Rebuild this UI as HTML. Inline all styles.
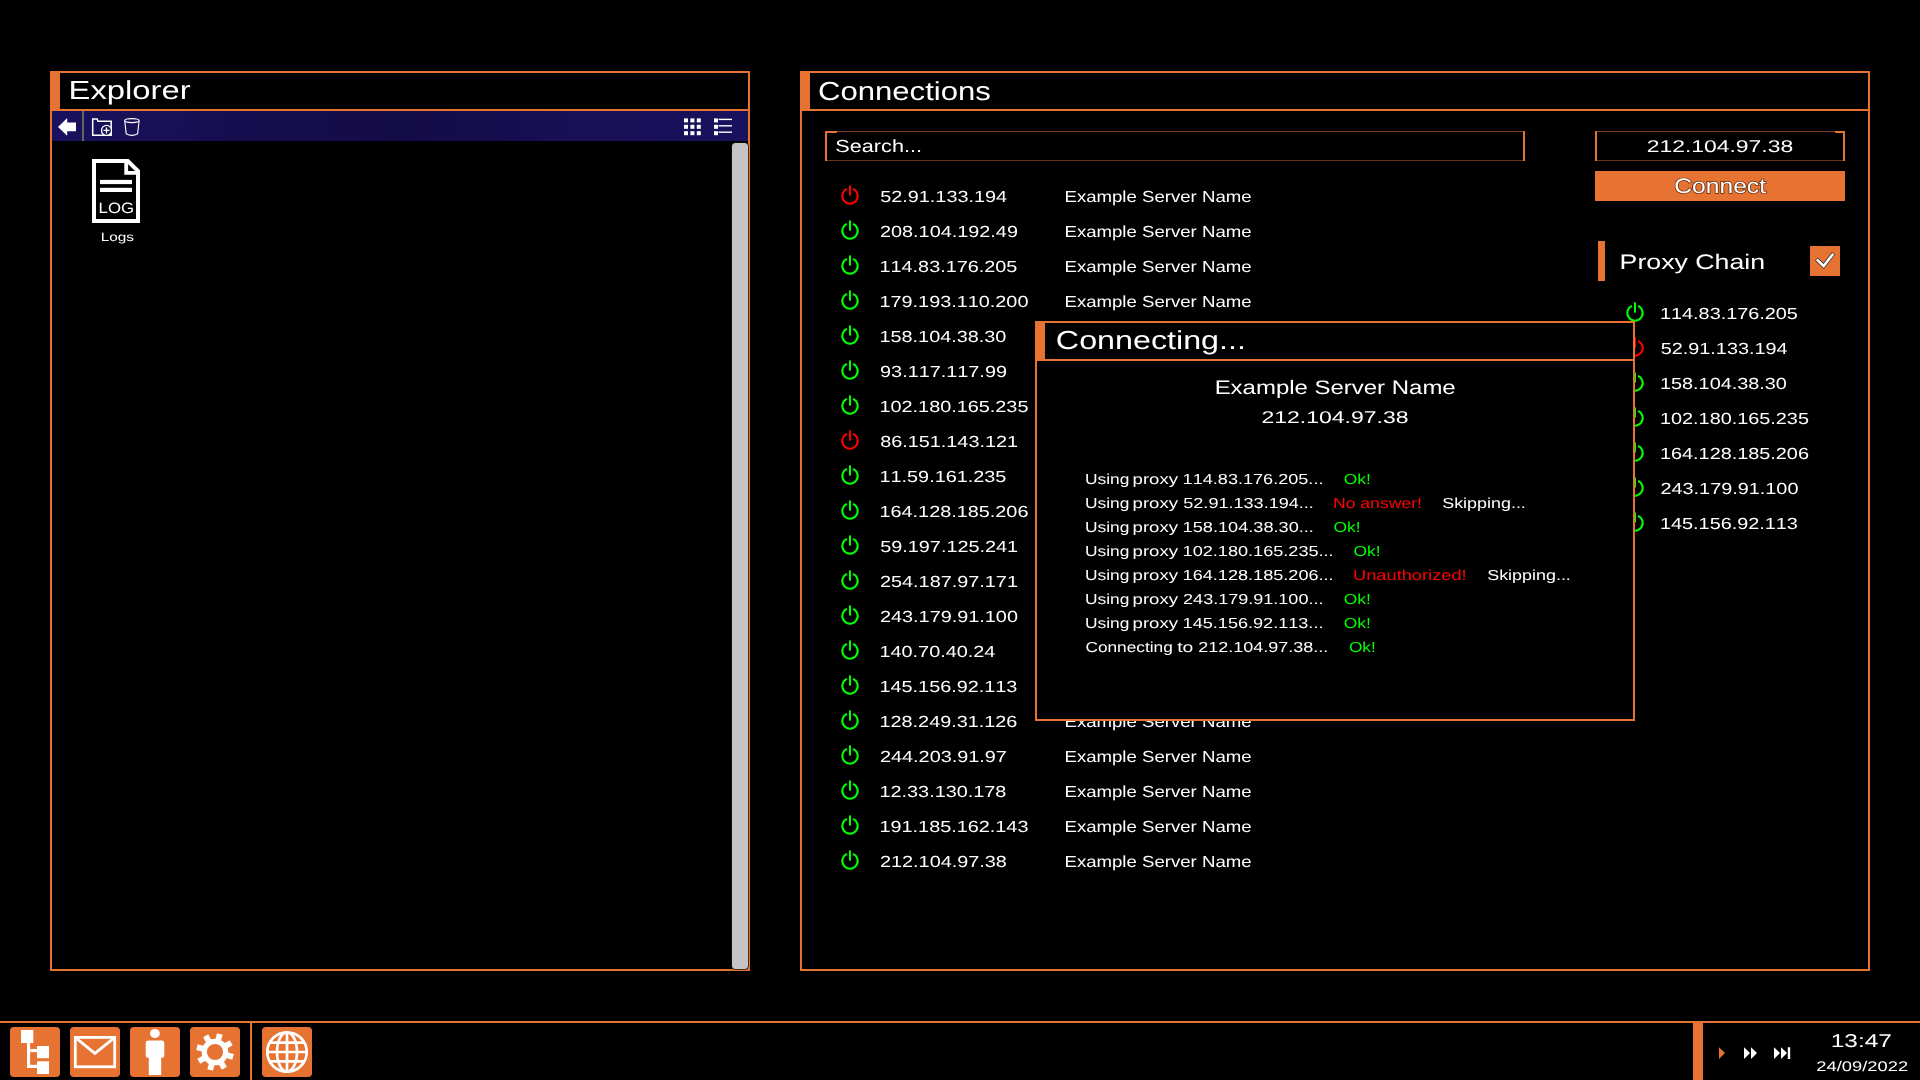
<!DOCTYPE html>
<html><head><meta charset="utf-8"><title>Connections</title>
<style>
html,body{margin:0;padding:0;background:#000;}
body{width:1920px;height:1080px;position:relative;overflow:hidden;font-family:"Liberation Sans",sans-serif;}
.a{position:absolute;display:block;}
.t{position:absolute;left:0;top:0;display:block;white-space:nowrap;transform-origin:0 0;font-kerning:none;will-change:transform;text-rendering:geometricPrecision;}
.win{position:absolute;box-sizing:border-box;border:2px solid #e67332;background:#000;}
</style></head><body>

<div class="win" style="left:50px;top:71px;width:700px;height:900px"></div>
<div class="a" style="left:50px;top:109px;width:700px;height:2px;background:#e67332"></div>
<div class="a" style="left:50px;top:71px;width:10px;height:40px;background:#e67332"></div>
<span class="t" style="font-size:26px;line-height:26px;color:#fff;transform:translate(68.61px,77px) scaleX(1.2594);">Explorer</span>
<div class="a" style="left:52px;top:111px;width:696px;height:30px;background:linear-gradient(93deg,#1a115f 0%,#170e50 25%,#140c47 50%,#180f55 75%,#1a115f 100%)"></div>
<div class="a" style="left:82px;top:111px;width:2px;height:30px;background:#64665f"></div>
<svg class="a" style="left:52px;top:111px" width="40" height="30" viewBox="52 111 40 30"><path d="M58 127L67.2 118V122.6H76V131.2H67.2V135.8Z" fill="#fff"/></svg>
<svg class="a" style="left:88px;top:113px" width="28" height="26" viewBox="88 113 28 26"><path d="M92.7 119.1H97.2L98 121.3H111.2V135.2H92.7Z" fill="none" stroke="#fff" stroke-width="1.5"/><circle cx="106.5" cy="130.4" r="5" fill="#19105a" stroke="#fff" stroke-width="1.3"/><path d="M103.5 130.4H109.5M106.5 127.4V133.4" stroke="#fff" stroke-width="1.3"/></svg>
<svg class="a" style="left:120px;top:113px" width="24" height="26" viewBox="120 113 24 26"><ellipse cx="131.9" cy="120.6" rx="7.2" ry="2" fill="none" stroke="#fff" stroke-width="1.1"/><path d="M124.7 120.6L126.2 133.8Q131.9 137 137.6 133.8L139.1 120.6" fill="none" stroke="#fff" stroke-width="1.1"/></svg>
<svg class="a" style="left:680px;top:114px" width="26" height="26" viewBox="680 114 26 26" fill="#fff"><rect x="684" y="118.4" width="4" height="4"/><rect x="684" y="124.8" width="4" height="4"/><rect x="684" y="131.2" width="4" height="4"/><rect x="690.4" y="118.4" width="4" height="4"/><rect x="690.4" y="124.8" width="4" height="4"/><rect x="690.4" y="131.2" width="4" height="4"/><rect x="696.8" y="118.4" width="4" height="4"/><rect x="696.8" y="124.8" width="4" height="4"/><rect x="696.8" y="131.2" width="4" height="4"/></svg>
<svg class="a" style="left:710px;top:114px" width="26" height="26" viewBox="710 114 26 26" fill="#fff"><rect x="714" y="118.4" width="4" height="4"/><rect x="718.6" y="118.7" width="13.4" height="1.4"/><rect x="714" y="124.8" width="4" height="4"/><rect x="718.6" y="125.1" width="13.4" height="1.4"/><rect x="714" y="131.2" width="4" height="4"/><rect x="718.6" y="131.5" width="13.4" height="1.4"/></svg>
<div class="a" style="left:732px;top:143px;width:16px;height:826px;background:#c4c4c4;border-radius:3.5px;box-shadow:0 0 0 1px rgba(20,14,10,.72)"></div>
<svg class="a" style="left:90px;top:157px" width="54" height="70" viewBox="90 157 54 70"><path d="M94 161H127.8L138 171.2V221H94Z" fill="none" stroke="#fff" stroke-width="4" stroke-linejoin="miter"/><path d="M126.2 161V172.9H138" fill="none" stroke="#fff" stroke-width="3.8"/><rect x="100" y="179.9" width="32" height="4.2" fill="#fff"/><rect x="100" y="187.8" width="32" height="4.2" fill="#fff"/></svg>
<span class="t" style="font-size:15px;line-height:15px;color:#fff;transform:translate(98.62px,201px) scaleX(1.1185);">LOG</span>
<span class="t" style="font-size:12px;line-height:12px;color:#fff;transform:translate(100.74px,231px) scaleX(1.2803);">Logs</span>
<div class="win" style="left:800px;top:71px;width:1070px;height:900px"></div>
<div class="a" style="left:800px;top:109px;width:1070px;height:2px;background:#e67332"></div>
<div class="a" style="left:800px;top:71px;width:10px;height:40px;background:#e67332"></div>
<span class="t" style="font-size:26px;line-height:26px;color:#fff;transform:translate(818.02px,78px) scaleX(1.1956);">Connections</span>
<div class="a" style="left:825px;top:131px;width:700px;height:30px;box-sizing:border-box;border:solid #783a19;border-width:1px 0;border-bottom-color:#663218;"></div>
<div class="a" style="left:825px;top:131px;width:2px;height:30px;background:#e67332"></div>
<div class="a" style="left:1523px;top:131px;width:2px;height:30px;background:#e67332"></div>
<div class="a" style="left:825px;top:131px;width:12px;height:2px;background:#e67332"></div>
<span class="t" style="font-size:17.5px;line-height:17.5px;color:#fff;transform:translate(835.32px,138px) scaleX(1.2374);">Search...</span>
<div class="a" style="left:1595px;top:131px;width:250px;height:30px;box-sizing:border-box;border:solid #783a19;border-width:1px 0;border-bottom-color:#663218;"></div>
<div class="a" style="left:1595px;top:131px;width:2px;height:30px;background:#e67332"></div>
<div class="a" style="left:1843px;top:131px;width:2px;height:30px;background:#e67332"></div>
<div class="a" style="left:1835px;top:131px;width:10px;height:2px;background:#e67332"></div>
<span class="t" style="font-size:17px;line-height:17px;color:#fff;transform:translate(1646.65px,138px) scaleX(1.3480);">212.104.97.38</span>
<div class="a" style="left:1595px;top:171px;width:250px;height:30px;background:#e67332"></div>
<span class="t" style="font-size:21px;line-height:21px;color:#fff;transform:translate(1674.35px,176px) scaleX(1.1715);-webkit-text-stroke:1.4px #5c2609;paint-order:stroke fill;">Connect</span>
<div class="a" style="left:1598px;top:241px;width:7px;height:40px;background:#e67332"></div>
<span class="t" style="font-size:21px;line-height:21px;color:#fff;transform:translate(1619.61px,252px) scaleX(1.2714);">Proxy Chain</span>
<div class="a" style="left:1810px;top:246px;width:30px;height:30px;background:#e67332"></div>
<svg class="a" style="left:1810px;top:246px" width="30" height="30" viewBox="1810 246 30 30"><path d="M1816.4 259L1823.6 266L1833.5 253.3" fill="none" stroke="#2b2b2b" stroke-width="4"/><path d="M1816.8 259.4L1823.6 266L1833.2 253.7" fill="none" stroke="#fff" stroke-width="2.6"/></svg>
<svg class="a" style="left:838px;top:182.25px" width="24" height="28" viewBox="838 182.25 24 28"><path d="M853.01 189.16A7.7 7.7 0 1 1 846.99 189.16" fill="none" stroke="#ff0000" stroke-width="2.05"/><rect x="849" y="185.65" width="2" height="10.2" fill="#ff0000"/></svg>
<span class="t" style="font-size:16px;line-height:16px;color:#fff;transform:translate(880.21px,190px) scaleX(1.2400);">52.91.133.194</span>
<span class="t" style="font-size:16px;line-height:16px;color:#fff;transform:translate(1064.47px,190px) scaleX(1.1628);">Example Server Name</span>
<svg class="a" style="left:838px;top:217.25px" width="24" height="28" viewBox="838 217.25 24 28"><path d="M853.01 224.16A7.7 7.7 0 1 1 846.99 224.16" fill="none" stroke="#00ff00" stroke-width="2.05"/><rect x="849" y="220.65" width="2" height="10.2" fill="#00ff00"/></svg>
<span class="t" style="font-size:16px;line-height:16px;color:#fff;transform:translate(880.00px,225px) scaleX(1.2400);">208.104.192.49</span>
<span class="t" style="font-size:16px;line-height:16px;color:#fff;transform:translate(1064.47px,225px) scaleX(1.1628);">Example Server Name</span>
<svg class="a" style="left:838px;top:252.25px" width="24" height="28" viewBox="838 252.25 24 28"><path d="M853.01 259.16A7.7 7.7 0 1 1 846.99 259.16" fill="none" stroke="#00ff00" stroke-width="2.05"/><rect x="849" y="255.65" width="2" height="10.2" fill="#00ff00"/></svg>
<span class="t" style="font-size:16px;line-height:16px;color:#fff;transform:translate(879.49px,260px) scaleX(1.2400);">114.83.176.205</span>
<span class="t" style="font-size:16px;line-height:16px;color:#fff;transform:translate(1064.47px,260px) scaleX(1.1628);">Example Server Name</span>
<svg class="a" style="left:838px;top:287.25px" width="24" height="28" viewBox="838 287.25 24 28"><path d="M853.01 294.16A7.7 7.7 0 1 1 846.99 294.16" fill="none" stroke="#00ff00" stroke-width="2.05"/><rect x="849" y="290.65" width="2" height="10.2" fill="#00ff00"/></svg>
<span class="t" style="font-size:16px;line-height:16px;color:#fff;transform:translate(879.49px,295px) scaleX(1.2400);">179.193.110.200</span>
<span class="t" style="font-size:16px;line-height:16px;color:#fff;transform:translate(1064.47px,295px) scaleX(1.1628);">Example Server Name</span>
<svg class="a" style="left:838px;top:322.25px" width="24" height="28" viewBox="838 322.25 24 28"><path d="M853.01 329.16A7.7 7.7 0 1 1 846.99 329.16" fill="none" stroke="#00ff00" stroke-width="2.05"/><rect x="849" y="325.65" width="2" height="10.2" fill="#00ff00"/></svg>
<span class="t" style="font-size:16px;line-height:16px;color:#fff;transform:translate(879.49px,330px) scaleX(1.2400);">158.104.38.30</span>
<span class="t" style="font-size:16px;line-height:16px;color:#fff;transform:translate(1064.47px,330px) scaleX(1.1628);">Example Server Name</span>
<svg class="a" style="left:838px;top:357.25px" width="24" height="28" viewBox="838 357.25 24 28"><path d="M853.01 364.16A7.7 7.7 0 1 1 846.99 364.16" fill="none" stroke="#00ff00" stroke-width="2.05"/><rect x="849" y="360.65" width="2" height="10.2" fill="#00ff00"/></svg>
<span class="t" style="font-size:16px;line-height:16px;color:#fff;transform:translate(880.07px,365px) scaleX(1.2400);">93.117.117.99</span>
<span class="t" style="font-size:16px;line-height:16px;color:#fff;transform:translate(1064.47px,365px) scaleX(1.1628);">Example Server Name</span>
<svg class="a" style="left:838px;top:392.25px" width="24" height="28" viewBox="838 392.25 24 28"><path d="M853.01 399.16A7.7 7.7 0 1 1 846.99 399.16" fill="none" stroke="#00ff00" stroke-width="2.05"/><rect x="849" y="395.65" width="2" height="10.2" fill="#00ff00"/></svg>
<span class="t" style="font-size:16px;line-height:16px;color:#fff;transform:translate(879.49px,400px) scaleX(1.2400);">102.180.165.235</span>
<span class="t" style="font-size:16px;line-height:16px;color:#fff;transform:translate(1064.47px,400px) scaleX(1.1628);">Example Server Name</span>
<svg class="a" style="left:838px;top:427.25px" width="24" height="28" viewBox="838 427.25 24 28"><path d="M853.01 434.16A7.7 7.7 0 1 1 846.99 434.16" fill="none" stroke="#ff0000" stroke-width="2.05"/><rect x="849" y="430.65" width="2" height="10.2" fill="#ff0000"/></svg>
<span class="t" style="font-size:16px;line-height:16px;color:#fff;transform:translate(880.14px,435px) scaleX(1.2400);">86.151.143.121</span>
<span class="t" style="font-size:16px;line-height:16px;color:#fff;transform:translate(1064.47px,435px) scaleX(1.1628);">Example Server Name</span>
<svg class="a" style="left:838px;top:462.25px" width="24" height="28" viewBox="838 462.25 24 28"><path d="M853.01 469.16A7.7 7.7 0 1 1 846.99 469.16" fill="none" stroke="#00ff00" stroke-width="2.05"/><rect x="849" y="465.65" width="2" height="10.2" fill="#00ff00"/></svg>
<span class="t" style="font-size:16px;line-height:16px;color:#fff;transform:translate(879.49px,470px) scaleX(1.2400);">11.59.161.235</span>
<span class="t" style="font-size:16px;line-height:16px;color:#fff;transform:translate(1064.47px,470px) scaleX(1.1628);">Example Server Name</span>
<svg class="a" style="left:838px;top:497.25px" width="24" height="28" viewBox="838 497.25 24 28"><path d="M853.01 504.16A7.7 7.7 0 1 1 846.99 504.16" fill="none" stroke="#00ff00" stroke-width="2.05"/><rect x="849" y="500.65" width="2" height="10.2" fill="#00ff00"/></svg>
<span class="t" style="font-size:16px;line-height:16px;color:#fff;transform:translate(879.49px,505px) scaleX(1.2400);">164.128.185.206</span>
<span class="t" style="font-size:16px;line-height:16px;color:#fff;transform:translate(1064.47px,505px) scaleX(1.1628);">Example Server Name</span>
<svg class="a" style="left:838px;top:532.25px" width="24" height="28" viewBox="838 532.25 24 28"><path d="M853.01 539.16A7.7 7.7 0 1 1 846.99 539.16" fill="none" stroke="#00ff00" stroke-width="2.05"/><rect x="849" y="535.65" width="2" height="10.2" fill="#00ff00"/></svg>
<span class="t" style="font-size:16px;line-height:16px;color:#fff;transform:translate(880.21px,540px) scaleX(1.2400);">59.197.125.241</span>
<span class="t" style="font-size:16px;line-height:16px;color:#fff;transform:translate(1064.47px,540px) scaleX(1.1628);">Example Server Name</span>
<svg class="a" style="left:838px;top:567.25px" width="24" height="28" viewBox="838 567.25 24 28"><path d="M853.01 574.16A7.7 7.7 0 1 1 846.99 574.16" fill="none" stroke="#00ff00" stroke-width="2.05"/><rect x="849" y="570.65" width="2" height="10.2" fill="#00ff00"/></svg>
<span class="t" style="font-size:16px;line-height:16px;color:#fff;transform:translate(880.00px,575px) scaleX(1.2400);">254.187.97.171</span>
<span class="t" style="font-size:16px;line-height:16px;color:#fff;transform:translate(1064.47px,575px) scaleX(1.1628);">Example Server Name</span>
<svg class="a" style="left:838px;top:602.25px" width="24" height="28" viewBox="838 602.25 24 28"><path d="M853.01 609.16A7.7 7.7 0 1 1 846.99 609.16" fill="none" stroke="#00ff00" stroke-width="2.05"/><rect x="849" y="605.65" width="2" height="10.2" fill="#00ff00"/></svg>
<span class="t" style="font-size:16px;line-height:16px;color:#fff;transform:translate(880.00px,610px) scaleX(1.2400);">243.179.91.100</span>
<span class="t" style="font-size:16px;line-height:16px;color:#fff;transform:translate(1064.47px,610px) scaleX(1.1628);">Example Server Name</span>
<svg class="a" style="left:838px;top:637.25px" width="24" height="28" viewBox="838 637.25 24 28"><path d="M853.01 644.16A7.7 7.7 0 1 1 846.99 644.16" fill="none" stroke="#00ff00" stroke-width="2.05"/><rect x="849" y="640.65" width="2" height="10.2" fill="#00ff00"/></svg>
<span class="t" style="font-size:16px;line-height:16px;color:#fff;transform:translate(879.49px,645px) scaleX(1.2400);">140.70.40.24</span>
<span class="t" style="font-size:16px;line-height:16px;color:#fff;transform:translate(1064.47px,645px) scaleX(1.1628);">Example Server Name</span>
<svg class="a" style="left:838px;top:672.25px" width="24" height="28" viewBox="838 672.25 24 28"><path d="M853.01 679.16A7.7 7.7 0 1 1 846.99 679.16" fill="none" stroke="#00ff00" stroke-width="2.05"/><rect x="849" y="675.65" width="2" height="10.2" fill="#00ff00"/></svg>
<span class="t" style="font-size:16px;line-height:16px;color:#fff;transform:translate(879.49px,680px) scaleX(1.2400);">145.156.92.113</span>
<span class="t" style="font-size:16px;line-height:16px;color:#fff;transform:translate(1064.47px,680px) scaleX(1.1628);">Example Server Name</span>
<svg class="a" style="left:838px;top:707.25px" width="24" height="28" viewBox="838 707.25 24 28"><path d="M853.01 714.16A7.7 7.7 0 1 1 846.99 714.16" fill="none" stroke="#00ff00" stroke-width="2.05"/><rect x="849" y="710.65" width="2" height="10.2" fill="#00ff00"/></svg>
<span class="t" style="font-size:16px;line-height:16px;color:#fff;transform:translate(879.49px,715px) scaleX(1.2400);">128.249.31.126</span>
<span class="t" style="font-size:16px;line-height:16px;color:#fff;transform:translate(1064.47px,715px) scaleX(1.1628);">Example Server Name</span>
<svg class="a" style="left:838px;top:742.25px" width="24" height="28" viewBox="838 742.25 24 28"><path d="M853.01 749.16A7.7 7.7 0 1 1 846.99 749.16" fill="none" stroke="#00ff00" stroke-width="2.05"/><rect x="849" y="745.65" width="2" height="10.2" fill="#00ff00"/></svg>
<span class="t" style="font-size:16px;line-height:16px;color:#fff;transform:translate(880.00px,750px) scaleX(1.2400);">244.203.91.97</span>
<span class="t" style="font-size:16px;line-height:16px;color:#fff;transform:translate(1064.47px,750px) scaleX(1.1628);">Example Server Name</span>
<svg class="a" style="left:838px;top:777.25px" width="24" height="28" viewBox="838 777.25 24 28"><path d="M853.01 784.16A7.7 7.7 0 1 1 846.99 784.16" fill="none" stroke="#00ff00" stroke-width="2.05"/><rect x="849" y="780.65" width="2" height="10.2" fill="#00ff00"/></svg>
<span class="t" style="font-size:16px;line-height:16px;color:#fff;transform:translate(879.49px,785px) scaleX(1.2400);">12.33.130.178</span>
<span class="t" style="font-size:16px;line-height:16px;color:#fff;transform:translate(1064.47px,785px) scaleX(1.1628);">Example Server Name</span>
<svg class="a" style="left:838px;top:812.25px" width="24" height="28" viewBox="838 812.25 24 28"><path d="M853.01 819.16A7.7 7.7 0 1 1 846.99 819.16" fill="none" stroke="#00ff00" stroke-width="2.05"/><rect x="849" y="815.65" width="2" height="10.2" fill="#00ff00"/></svg>
<span class="t" style="font-size:16px;line-height:16px;color:#fff;transform:translate(879.49px,820px) scaleX(1.2400);">191.185.162.143</span>
<span class="t" style="font-size:16px;line-height:16px;color:#fff;transform:translate(1064.47px,820px) scaleX(1.1628);">Example Server Name</span>
<svg class="a" style="left:838px;top:847.25px" width="24" height="28" viewBox="838 847.25 24 28"><path d="M853.01 854.16A7.7 7.7 0 1 1 846.99 854.16" fill="none" stroke="#00ff00" stroke-width="2.05"/><rect x="849" y="850.65" width="2" height="10.2" fill="#00ff00"/></svg>
<span class="t" style="font-size:16px;line-height:16px;color:#fff;transform:translate(880.00px,855px) scaleX(1.2400);">212.104.97.38</span>
<span class="t" style="font-size:16px;line-height:16px;color:#fff;transform:translate(1064.47px,855px) scaleX(1.1628);">Example Server Name</span>
<svg class="a" style="left:1623px;top:299.25px" width="24" height="28" viewBox="1623 299.25 24 28"><path d="M1638.01 306.16A7.7 7.7 0 1 1 1631.99 306.16" fill="none" stroke="#00ff00" stroke-width="2.05"/><rect x="1634" y="302.65" width="2" height="10.2" fill="#00ff00"/></svg>
<span class="t" style="font-size:16px;line-height:16px;color:#fff;transform:translate(1659.99px,307px) scaleX(1.2400);">114.83.176.205</span>
<svg class="a" style="left:1623px;top:334.25px" width="24" height="28" viewBox="1623 334.25 24 28"><path d="M1638.01 341.16A7.7 7.7 0 1 1 1631.99 341.16" fill="none" stroke="#ff0000" stroke-width="2.05"/><rect x="1634" y="337.65" width="2" height="10.2" fill="#ff0000"/></svg>
<span class="t" style="font-size:16px;line-height:16px;color:#fff;transform:translate(1660.71px,342px) scaleX(1.2400);">52.91.133.194</span>
<svg class="a" style="left:1623px;top:369.25px" width="24" height="28" viewBox="1623 369.25 24 28"><path d="M1638.01 376.16A7.7 7.7 0 1 1 1631.99 376.16" fill="none" stroke="#00ff00" stroke-width="2.05"/><rect x="1634" y="372.65" width="2" height="10.2" fill="#00ff00"/></svg>
<span class="t" style="font-size:16px;line-height:16px;color:#fff;transform:translate(1659.99px,377px) scaleX(1.2400);">158.104.38.30</span>
<svg class="a" style="left:1623px;top:404.25px" width="24" height="28" viewBox="1623 404.25 24 28"><path d="M1638.01 411.16A7.7 7.7 0 1 1 1631.99 411.16" fill="none" stroke="#00ff00" stroke-width="2.05"/><rect x="1634" y="407.65" width="2" height="10.2" fill="#00ff00"/></svg>
<span class="t" style="font-size:16px;line-height:16px;color:#fff;transform:translate(1659.99px,412px) scaleX(1.2400);">102.180.165.235</span>
<svg class="a" style="left:1623px;top:439.25px" width="24" height="28" viewBox="1623 439.25 24 28"><path d="M1638.01 446.16A7.7 7.7 0 1 1 1631.99 446.16" fill="none" stroke="#00ff00" stroke-width="2.05"/><rect x="1634" y="442.65" width="2" height="10.2" fill="#00ff00"/></svg>
<span class="t" style="font-size:16px;line-height:16px;color:#fff;transform:translate(1659.99px,447px) scaleX(1.2400);">164.128.185.206</span>
<svg class="a" style="left:1623px;top:474.25px" width="24" height="28" viewBox="1623 474.25 24 28"><path d="M1638.01 481.16A7.7 7.7 0 1 1 1631.99 481.16" fill="none" stroke="#00ff00" stroke-width="2.05"/><rect x="1634" y="477.65" width="2" height="10.2" fill="#00ff00"/></svg>
<span class="t" style="font-size:16px;line-height:16px;color:#fff;transform:translate(1660.50px,482px) scaleX(1.2400);">243.179.91.100</span>
<svg class="a" style="left:1623px;top:509.25px" width="24" height="28" viewBox="1623 509.25 24 28"><path d="M1638.01 516.16A7.7 7.7 0 1 1 1631.99 516.16" fill="none" stroke="#00ff00" stroke-width="2.05"/><rect x="1634" y="512.65" width="2" height="10.2" fill="#00ff00"/></svg>
<span class="t" style="font-size:16px;line-height:16px;color:#fff;transform:translate(1659.99px,517px) scaleX(1.2400);">145.156.92.113</span>
<div class="win" style="left:1035px;top:321px;width:600px;height:400px"></div>
<div class="a" style="left:1035px;top:359px;width:600px;height:2px;background:#e67332"></div>
<div class="a" style="left:1035px;top:321px;width:10px;height:40px;background:#e67332"></div>
<span class="t" style="font-size:26px;line-height:26px;color:#fff;transform:translate(1055.86px,327px) scaleX(1.2407);">Connecting...</span>
<span class="t" style="font-size:19.5px;line-height:19.5px;color:#fff;transform:translate(1214.63px,379px) scaleX(1.2288);">Example Server Name</span>
<span class="t" style="font-size:17px;line-height:17px;color:#fff;transform:translate(1261.44px,409px) scaleX(1.3527);">212.104.97.38</span>
<span class="t" style="font-size:14.5px;line-height:14.5px;color:#fff;transform:translate(1084.96px,473px) scaleX(1.1965);">Using</span>
<span class="t" style="font-size:14.5px;line-height:14.5px;color:#fff;transform:translate(1132.60px,473px) scaleX(1.2814);">proxy</span>
<span class="t" style="font-size:14.5px;line-height:14.5px;color:#fff;transform:translate(1182.62px,473px) scaleX(1.2476);">114.83.176.205...</span>
<span class="t" style="font-size:14.5px;line-height:14.5px;color:#00ff00;transform:translate(1343.67px,473px) scaleX(1.2017);">Ok!</span>
<span class="t" style="font-size:14.5px;line-height:14.5px;color:#fff;transform:translate(1084.96px,497px) scaleX(1.1965);">Using</span>
<span class="t" style="font-size:14.5px;line-height:14.5px;color:#fff;transform:translate(1132.60px,497px) scaleX(1.2814);">proxy</span>
<span class="t" style="font-size:14.5px;line-height:14.5px;color:#fff;transform:translate(1183.28px,497px) scaleX(1.2458);">52.91.133.194...</span>
<span class="t" style="font-size:14.5px;line-height:14.5px;color:#ff0000;transform:translate(1332.96px,497px) scaleX(1.2128);">No answer!</span>
<span class="t" style="font-size:14.5px;line-height:14.5px;color:#fff;transform:translate(1442.19px,497px) scaleX(1.2355);">Skipping...</span>
<span class="t" style="font-size:14.5px;line-height:14.5px;color:#fff;transform:translate(1084.96px,521px) scaleX(1.1965);">Using</span>
<span class="t" style="font-size:14.5px;line-height:14.5px;color:#fff;transform:translate(1132.60px,521px) scaleX(1.2814);">proxy</span>
<span class="t" style="font-size:14.5px;line-height:14.5px;color:#fff;transform:translate(1182.62px,521px) scaleX(1.2521);">158.104.38.30...</span>
<span class="t" style="font-size:14.5px;line-height:14.5px;color:#00ff00;transform:translate(1333.57px,521px) scaleX(1.2017);">Ok!</span>
<span class="t" style="font-size:14.5px;line-height:14.5px;color:#fff;transform:translate(1084.96px,545px) scaleX(1.1965);">Using</span>
<span class="t" style="font-size:14.5px;line-height:14.5px;color:#fff;transform:translate(1132.60px,545px) scaleX(1.2814);">proxy</span>
<span class="t" style="font-size:14.5px;line-height:14.5px;color:#fff;transform:translate(1182.62px,545px) scaleX(1.2488);">102.180.165.235...</span>
<span class="t" style="font-size:14.5px;line-height:14.5px;color:#00ff00;transform:translate(1353.57px,545px) scaleX(1.2017);">Ok!</span>
<span class="t" style="font-size:14.5px;line-height:14.5px;color:#fff;transform:translate(1084.96px,569px) scaleX(1.1965);">Using</span>
<span class="t" style="font-size:14.5px;line-height:14.5px;color:#fff;transform:translate(1132.60px,569px) scaleX(1.2814);">proxy</span>
<span class="t" style="font-size:14.5px;line-height:14.5px;color:#fff;transform:translate(1182.62px,569px) scaleX(1.2488);">164.128.185.206...</span>
<span class="t" style="font-size:14.5px;line-height:14.5px;color:#ff0000;transform:translate(1352.99px,569px) scaleX(1.2591);">Unauthorized!</span>
<span class="t" style="font-size:14.5px;line-height:14.5px;color:#fff;transform:translate(1487.19px,569px) scaleX(1.2355);">Skipping...</span>
<span class="t" style="font-size:14.5px;line-height:14.5px;color:#fff;transform:translate(1084.96px,593px) scaleX(1.1965);">Using</span>
<span class="t" style="font-size:14.5px;line-height:14.5px;color:#fff;transform:translate(1132.60px,593px) scaleX(1.2814);">proxy</span>
<span class="t" style="font-size:14.5px;line-height:14.5px;color:#fff;transform:translate(1183.09px,593px) scaleX(1.2434);">243.179.91.100...</span>
<span class="t" style="font-size:14.5px;line-height:14.5px;color:#00ff00;transform:translate(1343.67px,593px) scaleX(1.2017);">Ok!</span>
<span class="t" style="font-size:14.5px;line-height:14.5px;color:#fff;transform:translate(1084.96px,617px) scaleX(1.1965);">Using</span>
<span class="t" style="font-size:14.5px;line-height:14.5px;color:#fff;transform:translate(1132.60px,617px) scaleX(1.2814);">proxy</span>
<span class="t" style="font-size:14.5px;line-height:14.5px;color:#fff;transform:translate(1182.62px,617px) scaleX(1.2476);">145.156.92.113...</span>
<span class="t" style="font-size:14.5px;line-height:14.5px;color:#00ff00;transform:translate(1343.67px,617px) scaleX(1.2017);">Ok!</span>
<span class="t" style="font-size:14.5px;line-height:14.5px;color:#fff;transform:translate(1085.42px,641px) scaleX(1.1913);">Connecting</span>
<span class="t" style="font-size:14.5px;line-height:14.5px;color:#fff;transform:translate(1177.21px,641px) scaleX(1.3316);">to</span>
<span class="t" style="font-size:14.5px;line-height:14.5px;color:#fff;transform:translate(1198.30px,641px) scaleX(1.2408);">212.104.97.38...</span>
<span class="t" style="font-size:14.5px;line-height:14.5px;color:#00ff00;transform:translate(1348.88px,641px) scaleX(1.1920);">Ok!</span>
<div class="a" style="left:0;top:1021px;width:1920px;height:2px;background:#e67332"></div>
<div class="a" style="left:10px;top:1027px;width:50px;height:50px;background:#e67332;border-radius:4px"></div>
<div class="a" style="left:70px;top:1027px;width:50px;height:50px;background:#e67332;border-radius:4px"></div>
<div class="a" style="left:130px;top:1027px;width:50px;height:50px;background:#e67332;border-radius:4px"></div>
<div class="a" style="left:190px;top:1027px;width:50px;height:50px;background:#e67332;border-radius:4px"></div>
<div class="a" style="left:262px;top:1027px;width:50px;height:50px;background:#e67332;border-radius:4px"></div>
<div class="a" style="left:250px;top:1023px;width:2px;height:57px;background:#e67332"></div>
<svg class="a" style="left:10px;top:1027px" width="50" height="50" viewBox="10 1027 50 50" fill="#fff"><rect x="21" y="1030" width="12.3" height="13"/><rect x="27" y="1043" width="3.1" height="25"/><rect x="37" y="1046" width="12" height="12.2"/><rect x="37" y="1061.3" width="12" height="12.7"/><rect x="30" y="1049" width="7" height="3.1"/><rect x="27" y="1064.8" width="10" height="3.2"/></svg>
<svg class="a" style="left:70px;top:1027px" width="50" height="50" viewBox="70 1027 50 50"><rect x="75.3" y="1037.4" width="39.4" height="29.4" fill="none" stroke="#fff" stroke-width="2.8"/><path d="M75.5 1037.6L94.9 1053.4L114.5 1037.6" fill="none" stroke="#fff" stroke-width="2.8"/></svg>
<svg class="a" style="left:130px;top:1027px" width="50" height="50" viewBox="130 1027 50 50" fill="#fff"><ellipse cx="154.9" cy="1033.5" rx="4.9" ry="4.5"/><rect x="145.7" y="1040.6" width="18.6" height="17.2" rx="2.5"/><rect x="148.8" y="1050" width="12.4" height="25"/></svg>
<svg class="a" style="left:190px;top:1027px" width="50" height="50" viewBox="190 1027 50 50" fill="#fff"><circle cx="215" cy="1052" r="10.7" fill="none" stroke="#fff" stroke-width="5.2"/><rect x="212.1" y="1033.3" width="5.8" height="8" transform="rotate(15 215 1052)"/><rect x="212.1" y="1033.3" width="5.8" height="8" transform="rotate(60 215 1052)"/><rect x="212.1" y="1033.3" width="5.8" height="8" transform="rotate(105 215 1052)"/><rect x="212.1" y="1033.3" width="5.8" height="8" transform="rotate(150 215 1052)"/><rect x="212.1" y="1033.3" width="5.8" height="8" transform="rotate(195 215 1052)"/><rect x="212.1" y="1033.3" width="5.8" height="8" transform="rotate(240 215 1052)"/><rect x="212.1" y="1033.3" width="5.8" height="8" transform="rotate(285 215 1052)"/><rect x="212.1" y="1033.3" width="5.8" height="8" transform="rotate(330 215 1052)"/></svg>
<svg class="a" style="left:262px;top:1027px" width="50" height="50" viewBox="262 1027 50 50" fill="none" stroke="#fff" stroke-width="2.7"><circle cx="287" cy="1052" r="19.7"/><ellipse cx="287" cy="1052" rx="10" ry="19.7"/><path d="M287 1032V1072M267 1052H307M269.5 1042.6H304.5M269.5 1061.4H304.5"/></svg>
<div class="a" style="left:1693px;top:1021px;width:10px;height:59px;background:#e67332"></div>
<svg class="a" style="left:1710px;top:1040px" width="90" height="26" viewBox="1710 1040 90 26"><path d="M1719 1047.2L1725 1053.1L1719 1059Z" fill="#e67332"/><path d="M1744 1047.2L1750 1053.1L1744 1059ZM1751 1047.2L1757 1053.1L1751 1059ZM1774 1047.2L1780 1053.1L1774 1059ZM1781 1047.2L1787 1053.1L1781 1059ZM1787.8 1047.2H1790.2V1059H1787.8Z" fill="#fff"/></svg>
<span class="t" style="font-size:18.5px;line-height:18.5px;color:#fff;transform:translate(1830.74px,1032px) scaleX(1.3195);">13:47</span>
<span class="t" style="font-size:14px;line-height:14px;color:#fff;transform:translate(1816.28px,1059px) scaleX(1.3108);">24/09/2022</span>
</body></html>
